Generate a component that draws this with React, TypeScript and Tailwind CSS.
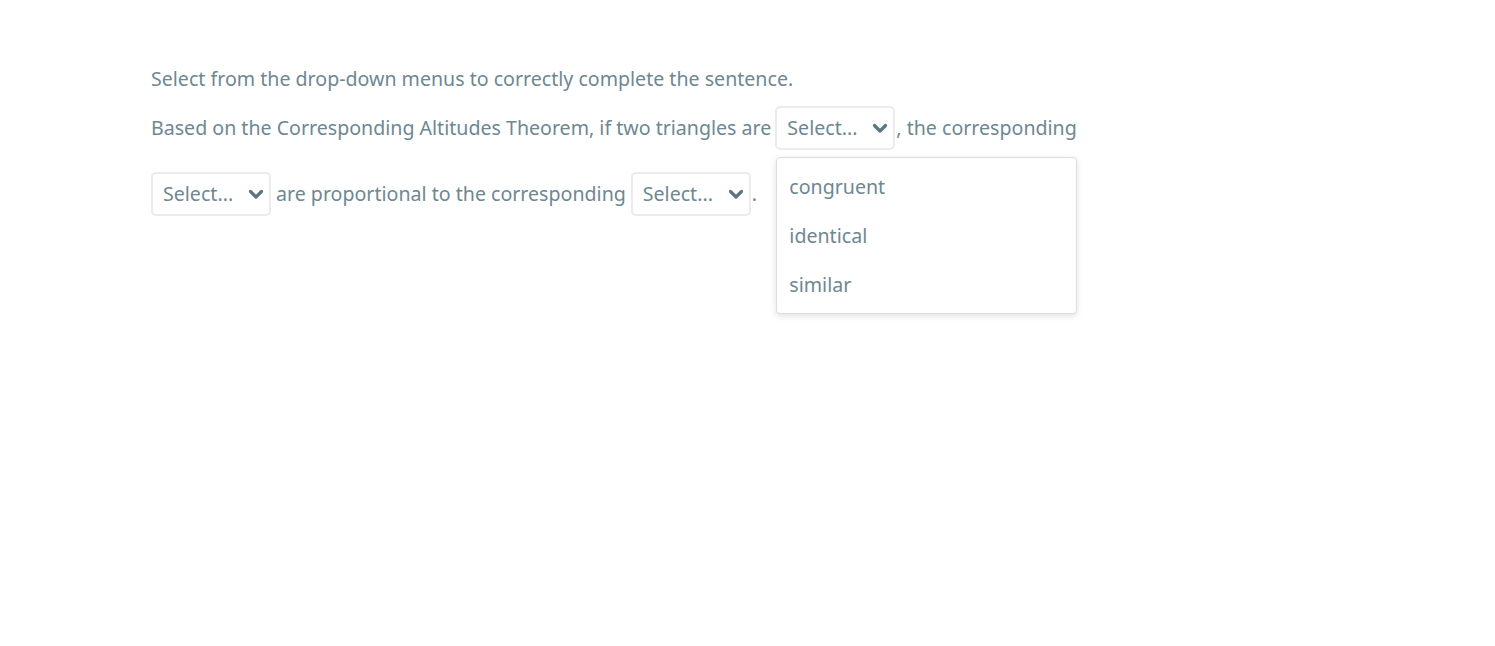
function Chevron() {
  return (
    <svg width="18" height="18" viewBox="0 0 18 18" className="text-[#5b7682]">
      <polyline points="3.5,6.5 9,12 14.5,6.5" fill="none" stroke="currentColor" strokeWidth="3.2" strokeLinecap="round" strokeLinejoin="round" />
    </svg>
  );
}

function SelectBox() {
  return (
    <span className="inline-flex items-center h-[44px] w-[120px] pl-[10px] pr-[4px] border-2 border-[#ebebeb] rounded-[5px] bg-white justify-between">
      <span>Select...</span>
      <Chevron />
    </span>
  );
}

export default function App() {
  return (
    <div className="min-h-screen w-full bg-white pt-[64px] pl-[151px] text-[19.6px] text-[#6e8791] font-['Noto_Sans',sans-serif]">
      <p className="leading-[30px]">Select from the drop-down menus to correctly complete the sentence.</p>
      <div className="mt-[12px] flex items-center gap-[5px]">
        <span>Based on the Corresponding Altitudes Theorem, if two triangles are</span>
        <span className="relative -ml-[1px]">
          <SelectBox />
          <ul className="absolute left-[1px] top-[51px] w-[301px] py-[4px] bg-white border border-[#dddddd] rounded-[4px] shadow-[0_2px_6px_rgba(0,0,0,0.12)] z-10">
            <li className="h-[49px] px-[12px] flex items-center">congruent</li>
            <li className="h-[49px] px-[12px] flex items-center">identical</li>
            <li className="h-[49px] px-[12px] flex items-center">similar</li>
          </ul>
        </span>
        <span className="-ml-[4px]">, the corresponding</span>
      </div>
      <div className="mt-[22px] flex items-center gap-[5px]">
        <SelectBox />
        <span>are proportional to the corresponding</span>
        <SelectBox />
        <span className="-ml-[4px]">.</span>
      </div>
    </div>
  );
}
